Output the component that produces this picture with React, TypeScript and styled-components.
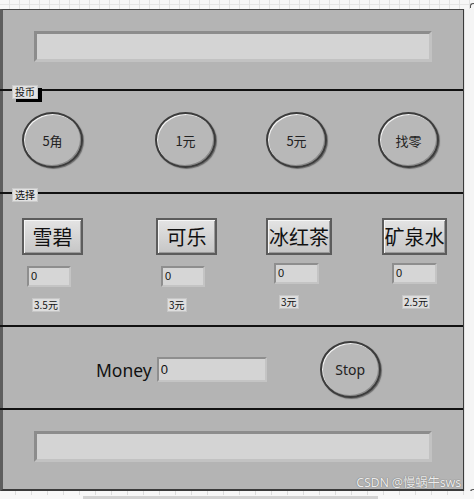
import React from "react";
import styled, { createGlobalStyle } from "styled-components";

const Global = createGlobalStyle`
  html, body { margin: 0; padding: 0; background: #f6f6f6; }
  body { width: 474px; height: 499px; overflow: hidden; font-family: "Noto Sans", "Noto Sans CJK SC", sans-serif; }
`;

const Frame = styled.div`
  width: 474px;
  height: 499px;
  display: flex;
  flex-direction: column;
  position: relative;
`;

const TopRuler = styled.div`
  height: 9px;
  background-color: #f7f7f7;
  background-image:
    repeating-linear-gradient(90deg, transparent 0 9px, #e2e2e2 9px 10px),
    linear-gradient(#f7f7f7 0 4px, #e6e6e6 4px 5px, #f7f7f7 5px);
`;

const Middle = styled.div`
  display: flex;
  height: 482px;
`;

const Panel = styled.div`
  width: 460px;
  background: #b4b4b4;
  border-left: 3px solid #5e5e5e;
  border-top: 1px solid #4a4a4a;
  border-right: 1px solid #3a3a3a;
  border-bottom: 2px solid #3a3a3a;
  display: flex;
  flex-direction: column;
  position: relative;
`;

const SideStrip = styled.div`
  flex: 1;
  background: #f5f5f5;
  border-left: 1px solid #e4e4e4;
  position: relative;
`;

const SideMark = styled.div<{ $top: number }>`
  position: absolute;
  left: 5px;
  top: ${(p) => p.$top}px;
  width: 3px;
  height: 4px;
  border-top: 1px solid #555;
  border-left: 1px solid #555;
  border-top-left-radius: 3px;
`;

const BottomRuler = styled.div`
  height: 8px;
  background-color: #f7f7f7;
  background-image: repeating-linear-gradient(90deg, transparent 0 15px, #dcdcdc 15px 16px);
  background-size: 100% 4px;
  background-repeat: no-repeat;
  position: relative;
`;

const ScrollThumb = styled.div`
  position: absolute;
  left: 83px;
  width: 295px;
  bottom: 0;
  height: 3px;
  background: #d2d2d2;
`;

const Section = styled.div<{ $h: number; $pt: number }>`
  height: ${(p) => p.$h}px;
  padding-top: ${(p) => p.$pt}px;
  box-sizing: border-box;
  display: flex;
  flex-direction: column;
`;

const Divider = styled.div`
  height: 2px;
  background: #111;
  margin-left: -3px;
  position: relative;
`;

const GroupLabel = styled.div<{ $shadow?: boolean }>`
  position: absolute;
  left: 12px;
  top: -4px;
  height: 12px;
  padding: 0 2px;
  background: #e2e2e2;
  border: 1px solid #c9c9c9;
  font-family: "Noto Sans CJK SC", sans-serif;
  font-size: 10px;
  line-height: 12px;
  color: #111;
  box-shadow: ${(p) => (p.$shadow ? "4px 3px 0 #000" : "none")};
`;

const WideField = styled.div`
  align-self: center;
  width: 398px;
  height: 31px;
  box-sizing: border-box;
  background: #d4d4d4;
  border-top: 3px solid #8c8c8c;
  border-left: 3px solid #8c8c8c;
  border-bottom: 3px solid #c2c2c2;
  border-right: 3px solid #c2c2c2;
  margin-left: -1px;
`;

const Row = styled.div<{ $pl: number }>`
  display: flex;
  align-items: flex-start;
  padding-left: ${(p) => p.$pl}px;
`;

const Coin = styled.div<{ $ml: number }>`
  margin-left: ${(p) => p.$ml}px;
  width: 61px;
  height: 56px;
  box-sizing: border-box;
  border-radius: 50%;
  border: 2px solid #3c3c3c;
  background: #b8b8b8;
  box-shadow: inset 1px 1px 0 #f2f2f2, inset -1px -1px 0 #8a8a8a, 1px 1px 1px #6a6a6a;
  display: flex;
  align-items: center;
  justify-content: center;
  font-family: "Noto Sans CJK SC", sans-serif;
  font-size: 13px;
  color: #222;
`;

const DrinkCol = styled.div<{ $ml: number }>`
  margin-left: ${(p) => p.$ml}px;
  display: flex;
  flex-direction: column;
  align-items: flex-start;
`;

const DrinkButton = styled.div<{ $w: number }>`
  width: ${(p) => p.$w}px;
  height: 37px;
  box-sizing: border-box;
  border: 2px solid #5c5c5c;
  background: linear-gradient(#e4e4e4, #c6c6c6);
  box-shadow: inset 1px 1px 0 #f6f6f6, inset -1px -1px 0 #9a9a9a;
  display: flex;
  align-items: center;
  justify-content: center;
  font-family: "Noto Sans CJK SC", sans-serif;
  font-size: 20px;
  color: #111;
`;

const NumField = styled.div<{ $ml: number; $mt: number; $w: number }>`
  margin-left: ${(p) => p.$ml}px;
  margin-top: ${(p) => p.$mt}px;
  width: ${(p) => p.$w}px;
  height: 21px;
  box-sizing: border-box;
  background: #d6d6d6;
  border-top: 2px solid #8e8e8e;
  border-left: 2px solid #8e8e8e;
  border-bottom: 2px solid #c4c4c4;
  border-right: 2px solid #c4c4c4;
  font-family: "Liberation Sans", sans-serif;
  font-size: 11px;
  line-height: 17px;
  padding-left: 2px;
  color: #111;
`;

const Price = styled.div<{ $ml: number; $mt: number }>`
  margin-left: ${(p) => p.$ml}px;
  margin-top: ${(p) => p.$mt}px;
  height: 14px;
  padding: 0 1px;
  background: #dedede;
  border: 1px solid #c6c6c6;
  font-family: "Noto Sans CJK SC", sans-serif;
  font-size: 10px;
  line-height: 12px;
  color: #111;
  box-sizing: border-box;
`;

const MoneyRow = styled.div`
  display: flex;
  align-items: center;
  padding-left: 93px;
`;

const MoneyLabel = styled.div`
  font-family: "Noto Sans", sans-serif;
  font-size: 17.5px;
  color: #111;
  margin-right: 5px;
`;

const MoneyField = styled.div`
  width: 110px;
  height: 25px;
  box-sizing: border-box;
  background: #d4d4d4;
  border-top: 2px solid #8e8e8e;
  border-left: 2px solid #8e8e8e;
  border-bottom: 2px solid #c4c4c4;
  border-right: 2px solid #c4c4c4;
  font-family: "Liberation Sans", sans-serif;
  font-size: 13px;
  line-height: 21px;
  padding-left: 2px;
  color: #111;
`;

const StopButton = styled(Coin)`
  height: 57px;
  font-family: "Noto Sans", sans-serif;
  font-size: 14px;
`;

const Watermark = styled.div`
  position: absolute;
  right: 2px;
  bottom: -2px;
  font-family: "Noto Sans", "Noto Sans CJK SC", sans-serif;
  font-size: 12.5px;
  color: #ececec;
  text-shadow: 0 0 1px #777, 0 0 1px #777;
  letter-spacing: -0.2px;
`;

const coins = [
  { t: "5角", ml: 0 },
  { t: "1元", ml: 72 },
  { t: "5元", ml: 50 },
  { t: "找零", ml: 51 },
];

const drinks = [
  { t: "雪碧", ml: 0, w: 61, fml: 5, fmt: 11, fw: 44, pml: 10, pmt: 11, p: "3.5元" },
  { t: "可乐", ml: 73, w: 61, fml: 5, fmt: 11, fw: 44, pml: 11, pmt: 11, p: "3元" },
  { t: "冰红茶", ml: 49, w: 66, fml: 8, fmt: 8, fw: 45, pml: 13, pmt: 11, p: "3元" },
  { t: "矿泉水", ml: 50, w: 65, fml: 10, fmt: 8, fw: 45, pml: 20, pmt: 11, p: "2.5元" },
];

export default function App() {
  return (
    <Frame>
      <Global />
      <TopRuler />
      <Middle>
        <Panel>
          <Section $h={79} $pt={21}>
            <WideField />
          </Section>
          <Divider>
            <GroupLabel $shadow>投币</GroupLabel>
          </Divider>
          <Section $h={101} $pt={21}>
            <Row $pl={19}>
              {coins.map((c) => (
                <Coin key={c.t} $ml={c.ml}>{c.t}</Coin>
              ))}
            </Row>
          </Section>
          <Divider>
            <GroupLabel>选择</GroupLabel>
          </Divider>
          <Section $h={131} $pt={24}>
            <Row $pl={19}>
              {drinks.map((d) => (
                <DrinkCol key={d.t} $ml={d.ml}>
                  <DrinkButton $w={d.w}>{d.t}</DrinkButton>
                  <NumField $ml={d.fml} $mt={d.fmt} $w={d.fw}>0</NumField>
                  <Price $ml={d.pml} $mt={d.pmt}>{d.p}</Price>
                </DrinkCol>
              ))}
            </Row>
          </Section>
          <Divider />
          <Section $h={81} $pt={14}>
            <MoneyRow>
              <MoneyLabel>Money</MoneyLabel>
              <MoneyField>0</MoneyField>
              <StopButton $ml={53}>Stop</StopButton>
            </MoneyRow>
          </Section>
          <Divider />
          <Section $h={79} $pt={21}>
            <WideField />
          </Section>
          <Watermark>CSDN @慢蜗牛sws</Watermark>
        </Panel>
        <SideStrip>
          <SideMark $top={-6} />
          <SideMark $top={480} />
        </SideStrip>
      </Middle>
      <BottomRuler>
        <ScrollThumb />
      </BottomRuler>
    </Frame>
  );
}
